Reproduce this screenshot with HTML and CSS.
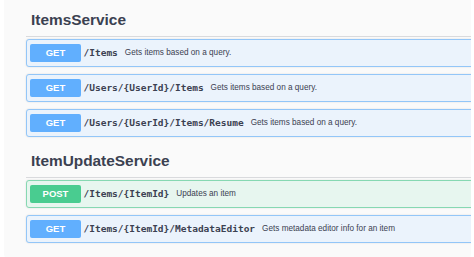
FILE: index.html
```html
<!DOCTYPE html>
<html lang="en">
<head>
    <meta charset="UTF-8">
    <meta name="viewport" content="width=device-width, initial-scale=1.0">
    <title>API Operations</title>
    <link rel="stylesheet" href="styles.css">
</head>
<body>

    <div class="panel">

        <!-- ItemsService -->
        <div class="tag-section">
            <h3 class="tag-title">ItemsService</h3>
            <div class="op op-get">
                <span class="method">GET</span>
                <span class="path">/Items</span>
                <span class="desc">Gets items based on a query.</span>
            </div>
            <div class="op op-get">
                <span class="method">GET</span>
                <span class="path">/Users/{UserId}/Items</span>
                <span class="desc">Gets items based on a query.</span>
            </div>
            <div class="op op-get">
                <span class="method">GET</span>
                <span class="path">/Users/{UserId}/Items/Resume</span>
                <span class="desc">Gets items based on a query.</span>
            </div>
        </div>

        <!-- ItemUpdateService -->
        <div class="tag-section">
            <h3 class="tag-title">ItemUpdateService</h3>
            <div class="op op-post">
                <span class="method">POST</span>
                <span class="path">/Items/{ItemId}</span>
                <span class="desc">Updates an item</span>
            </div>
            <div class="op op-get">
                <span class="method">GET</span>
                <span class="path">/Items/{ItemId}/MetadataEditor</span>
                <span class="desc">Gets metadata editor info for an item</span>
            </div>
        </div>

    </div>

</body>
</html>
```

FILE: styles.css
```css
body {
    margin: 0;
    padding: 0;
    background-color: #ffffff;
    font-family: "Liberation Sans", Arial, sans-serif;
    color: #3b4151;
}

.panel {
    margin: 0 3px 0 4px;
    padding: 3px 0 9px 22px;
    background-color: #fafafa;
    border-radius: 0 0 5px 5px;
    overflow: hidden;
}

.tag-title {
    margin: 0 0 2px 0;
    padding: 7.4px 0 5.6px 5px;
    font-size: 15.4px;
    line-height: 20px;
    font-weight: bold;
    color: #3b4151;
    border-bottom: 1px solid #d9dadd;
}

.op {
    display: flex;
    align-items: center;
    height: 18px;
    padding: 4px 3px;
    margin: 0 -4px 7px 0;
    border: 1px solid;
    border-radius: 3px;
    box-shadow: 0 0 2px rgba(0, 0, 0, 0.12);
}

.op-get {
    background-color: #ebf3fc;
    border-color: #93c6f8;
}

.op-post {
    background-color: #e7f6ef;
    border-color: #86d8b2;
}

.method {
    width: 51px;
    height: 18px;
    line-height: 18px;
    border-radius: 2px;
    text-align: center;
    font-size: 9.5px;
    font-weight: bold;
    color: #ffffff;
    flex-shrink: 0;
}

.op-get .method {
    background-color: #61affe;
}

.op-post .method {
    background-color: #49cc90;
}

.path {
    padding-left: 2.5px;
    font-family: "DejaVu Sans Mono", "Liberation Mono", monospace;
    font-size: 9.5px;
    font-weight: bold;
    color: #3b4151;
    white-space: nowrap;
}

.desc {
    padding-left: 7px;
    font-size: 8.2px;
    color: #3b4151;
    white-space: nowrap;
}
```
